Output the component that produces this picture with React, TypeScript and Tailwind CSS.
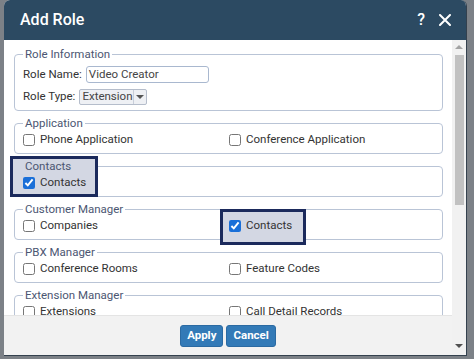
import type { ReactNode } from "react";

const FONT = { fontFamily: "Roboto, 'Noto Sans', Arial, sans-serif" };

function Check({ label, checked = false }: { label: string; checked?: boolean }) {
  return (
    <label className="relative z-10 flex h-[14px] items-center gap-[5px] whitespace-nowrap text-[11.5px] text-[#333]">
      <input
        type="checkbox"
        defaultChecked={checked}
        className="m-0 h-[12px] w-[12px] accent-[#1a6fd8]"
      />
      {label}
    </label>
  );
}

// Boxes drawn over the form to call out the two Contacts permissions.
function Callout({ className }: { className: string }) {
  return (
    <div
      className={`absolute z-0 border-[3px] border-[#1b2a5c] bg-[#d3d7e3] ${className}`}
    />
  );
}

function Group({
  title,
  children,
  callout,
  pad = "pt-[3px] pb-[6px]",
}: {
  title: string;
  children: ReactNode;
  callout?: ReactNode;
  pad?: string;
}) {
  return (
    <div className="relative mx-[9px] ml-[10px] mb-[5px]">
      {callout}
      <fieldset className={`rounded-[4px] border border-[#b9c4d6] px-[8px] ${pad}`}>
        <legend className="relative z-10 px-[2px] text-[11.5px] leading-[14px] text-[#4b5672]">
          {title}
        </legend>
        {children}
      </fieldset>
    </div>
  );
}

function Row({ left, right }: { left: ReactNode; right?: ReactNode }) {
  return (
    <div className="grid grid-cols-[206px_1fr]">
      <div>{left}</div>
      <div>{right}</div>
    </div>
  );
}

function Scrollbar() {
  return (
    <div className="flex w-[14px] flex-col items-center bg-[#f1f1f1] pt-[5px]">
      <div className="h-0 w-0 border-x-[4px] border-b-[4px] border-x-transparent border-b-[#a3a3a3]" />
      <div className="mt-[6px] h-[150px] w-[9px] bg-[#c1c1c1]" />
      <div className="flex-1" />
      <div className="mb-[7px] h-0 w-0 border-x-[4px] border-t-[4px] border-x-transparent border-t-[#505050]" />
    </div>
  );
}

export default function App() {
  return (
    <div className="h-[359px] w-[474px] overflow-hidden bg-[#7c8187]" style={FONT}>
      <div className="ml-[4px] flex h-[356px] w-[463px] flex-col overflow-hidden rounded-t-[6px] border-r border-b border-[#34414e] bg-white">
        <div className="flex h-[40px] shrink-0 items-center bg-[#2c4a62] pl-[16px] pr-[14px] text-white">
          <div className="flex-1 text-[16px] font-medium">Add Role</div>
          <div className="mr-[14px] text-[16px] font-medium">?</div>
          <svg width="12" height="12" viewBox="0 0 12 12" className="mr-[1px]">
            <path d="M1 1L11 11M11 1L1 11" stroke="white" strokeWidth="2" strokeLinecap="round" />
          </svg>
        </div>

        <div className="flex flex-1">
          <div className="flex flex-1 flex-col">
            <div className="h-[275px] overflow-hidden pt-[7px]">
              <Group title="Role Information" pad="pt-[3px] pb-[5px]">
                <div className="flex flex-col gap-[6px] pt-[2px]">
                  <div className="flex h-[17px] items-center gap-[4px] whitespace-nowrap text-[11.5px] text-[#333]">
                    <span>Role Name:</span>
                    <div className="flex h-[17px] w-[123px] items-center rounded-[3px] border border-[#a9b8cf] px-[2px] text-[#444]">
                      Video Creator
                    </div>
                  </div>
                  <div className="flex h-[16px] items-center gap-[4px] whitespace-nowrap text-[11.5px] text-[#333]">
                    <span>Role Type:</span>
                    <div className="flex h-[16px] w-[68px] items-center rounded-[2px] border border-[#b5bdcb] bg-[#eef0f4] text-[#444]">
                      <span className="flex-1 pl-[2px]">Extension</span>
                      <span className="flex h-full w-[13px] items-center justify-center border-l border-[#c8ceda]">
                        <span className="h-0 w-0 border-x-[4px] border-t-[4px] border-x-transparent border-t-[#555]" />
                      </span>
                    </div>
                  </div>
                </div>
              </Group>

              <Group title="Application">
                <Row left={<Check label="Phone Application" />} right={<Check label="Conference Application" />} />
              </Group>

              <Group
                title="Contacts"
                callout={<Callout className="-left-[4px] -top-[3px] h-[41px] w-[88px]" />}
              >
                <Row left={<Check label="Contacts" checked />} />
              </Group>

              <Group
                title="Customer Manager"
                callout={<Callout className="left-[206px] top-[7px] h-[36px] w-[86px]" />}
              >
                <Row left={<Check label="Companies" />} right={<Check label="Contacts" checked />} />
              </Group>

              <Group title="PBX Manager">
                <Row left={<Check label="Conference Rooms" />} right={<Check label="Feature Codes" />} />
              </Group>

              <Group title="Extension Manager">
                <Row left={<Check label="Extensions" />} right={<Check label="Call Detail Records" />} />
              </Group>
            </div>

            <div className="flex h-[40px] items-center justify-center gap-[3px] border-t border-[#e4e4e4] bg-[#f2f2f2]">
              <button className="h-[22px] rounded-[3px] border border-[#2b6aa2] bg-[#337ab7] px-[6px] text-[11.5px] font-bold text-white">
                Apply
              </button>
              <button className="h-[22px] rounded-[3px] border border-[#2b6aa2] bg-[#337ab7] px-[6px] text-[11.5px] font-bold text-white">
                Cancel
              </button>
            </div>
          </div>
          <Scrollbar />
        </div>
      </div>
    </div>
  );
}
